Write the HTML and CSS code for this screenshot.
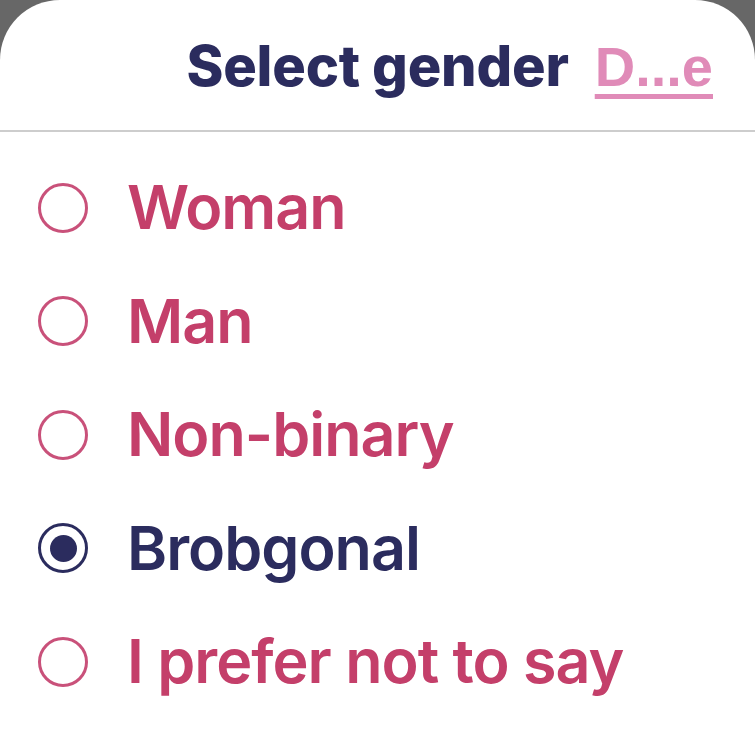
FILE: index.html
```html
<!DOCTYPE html>
<html lang="en">
<head>
<meta charset="utf-8">
<title>Select gender</title>
<link rel="stylesheet" href="styles.css">
</head>
<body>
<div class="sheet">
  <header class="sheet-header">
    <h1 class="title">Select gender</h1>
    <a class="done" href="#">D...e</a>
  </header>
  <ul class="options">
    <li class="option"><span class="radio"></span><span class="label">Woman</span></li>
    <li class="option"><span class="radio"></span><span class="label">Man</span></li>
    <li class="option"><span class="radio"></span><span class="label">Non-binary</span></li>
    <li class="option selected"><span class="radio"></span><span class="label">Brobgonal</span></li>
    <li class="option"><span class="radio"></span><span class="label">I prefer not to say</span></li>
  </ul>
</div>
</body>
</html>
```
FILE: styles.css
```css
html, body {
  margin: 0;
  padding: 0;
  height: 100%;
}
body {
  background: #676767;
  font-family: Inter, "Noto Sans", sans-serif;
  overflow: hidden;
}
.sheet {
  background: #ffffff;
  border-radius: 60px 60px 0 0;
  height: 100%;
  box-sizing: border-box;
}
.sheet-header {
  height: 130px;
  border-bottom: 2px solid #cdcdcd;
  display: flex;
  align-items: center;
  justify-content: flex-end;
  padding: 0 42px 0 0;
  box-sizing: content-box;
}
.title {
  margin: 0;
  font-size: 56px;
  font-weight: 800;
  color: #2b2c5e;
  letter-spacing: -0.2px;
  margin-right: 26px;
  position: relative;
  top: 1px;
}
.done {
  font-family: "Liberation Sans", Arial, sans-serif;
  font-weight: 700;
  font-size: 56px;
  color: #e08bb8;
  text-decoration: underline;
  text-decoration-thickness: 5px;
  text-underline-offset: 8px;
  position: relative;
  top: 1px;
}
.options {
  list-style: none;
  margin: 0;
  padding: 19px 0 0 0;
}
.option {
  height: 113.5px;
  display: flex;
  align-items: center;
  padding-left: 38px;
}
.radio {
  width: 50px;
  height: 50px;
  box-sizing: border-box;
  border: 3px solid #c9517a;
  border-radius: 50%;
  flex: none;
  display: flex;
  align-items: center;
  justify-content: center;
  margin-right: 39px;
}
.label {
  font-size: 61px;
  font-weight: 600;
  color: #c43f6a;
  letter-spacing: -1px;
  line-height: 1;
}
.option.selected .radio {
  border-color: #2b2c5e;
  border-width: 3px;
}
.option.selected .radio::after {
  content: "";
  width: 27px;
  height: 27px;
  border-radius: 50%;
  background: #2b2c5e;
}
.option.selected .label {
  color: #2b2c5e;
}
```
